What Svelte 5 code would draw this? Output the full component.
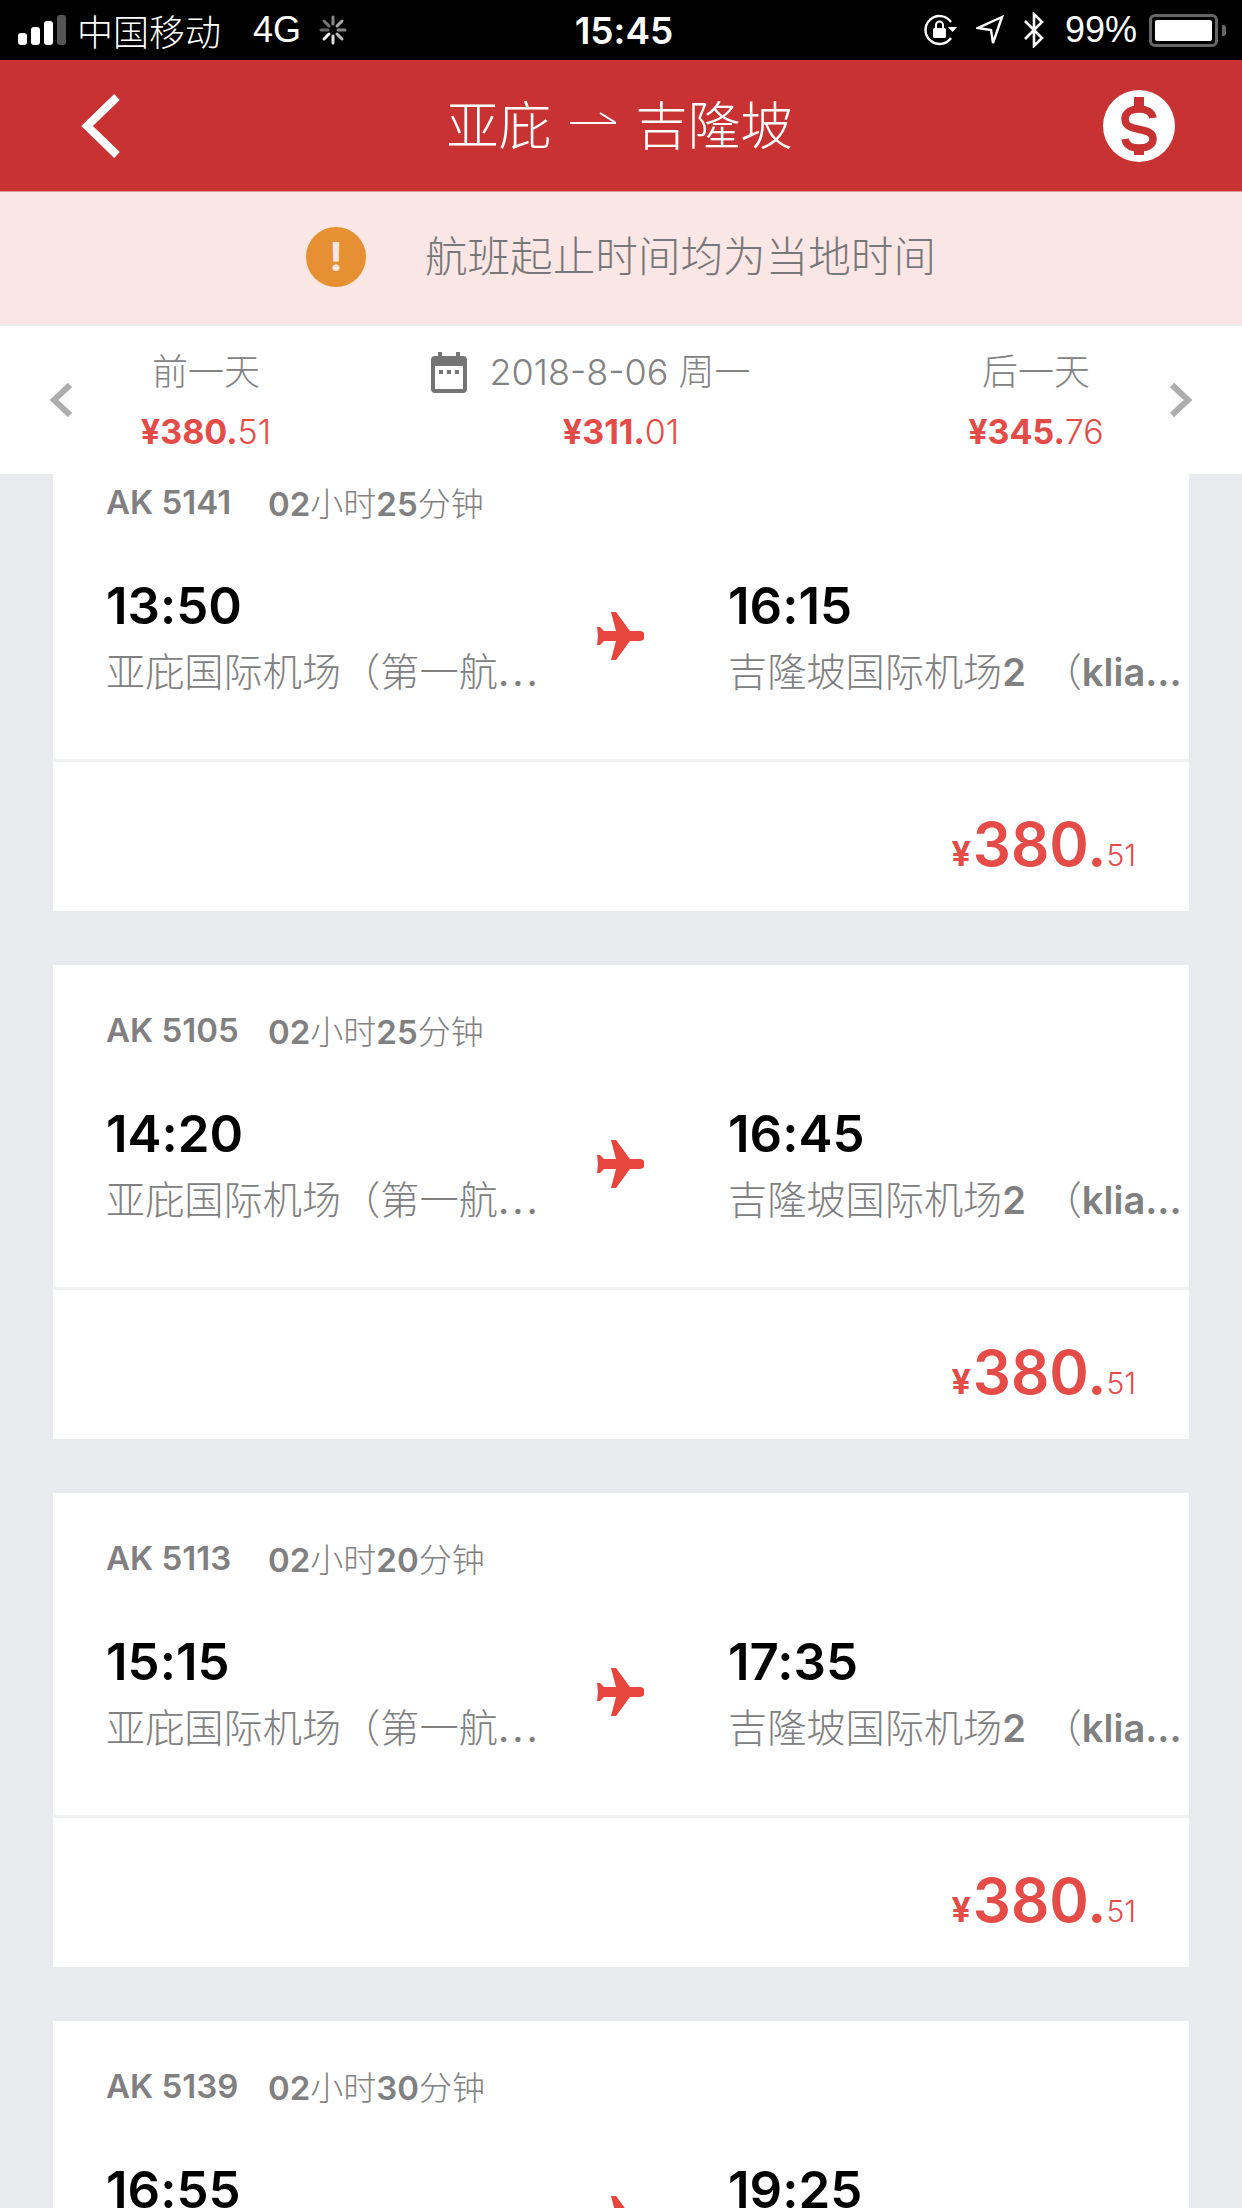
<script>
    const days = [
        { label: '前一天', yuan: '380', cents: '51', side: 'prev' },
        { label: '2018-8-06 周一', yuan: '311', cents: '01', side: 'mid' },
        { label: '后一天', yuan: '345', cents: '76', side: 'next' }
    ];

    const flights = [
        { no: 'AK 5141', hours: '02', mins: '25', dep: '13:50', arr: '16:15' },
        { no: 'AK 5105', hours: '02', mins: '25', dep: '14:20', arr: '16:45' },
        { no: 'AK 5113', hours: '02', mins: '20', dep: '15:15', arr: '17:35' },
        { no: 'AK 5139', hours: '02', mins: '30', dep: '16:55', arr: '19:25' }
    ];
</script>

<div class="screen">
    <div class="status">
        <div class="status-left">
            <div class="signal"><i></i><i></i><i></i><i class="off"></i></div>
            <span class="carrier">中国移动</span>
            <span class="net">4G</span>
            <svg class="spinner" width="28" height="30" viewBox="0 0 28 30">
                <g stroke-width="3" stroke-linecap="round">
                    <path d="M14 2v7" stroke="#888" />
                    <path d="M14 21v7" stroke="#ddd" />
                    <path d="M2 15h7" stroke="#666" />
                    <path d="M19 15h7" stroke="#888" />
                    <path d="M5 6l5 5" stroke="#777" />
                    <path d="M23 6l-5 5" stroke="#aaa" />
                    <path d="M5 24l5-5" stroke="#fff" />
                    <path d="M23 24l-5-5" stroke="#bbb" />
                </g>
            </svg>
        </div>
        <span class="clock">15:45</span>
        <div class="status-right">
            <svg width="33" height="34" viewBox="0 0 33 34" fill="none">
                <path d="M27 9A14 14 0 1 0 27 25" stroke="#fff" stroke-width="2.400" />
                <path d="M24 14h9l-4.500 5z" fill="#fff" />
                <rect x="9" y="15" width="13" height="10" rx="1.500" fill="#fff" />
                <path d="M12 15v-3a3.500 3.500 0 0 1 7 0v3" stroke="#fff" stroke-width="2" />
            </svg>
            <svg width="28" height="32" viewBox="0 0 28 32" fill="none">
                <path d="M26 3L2 14l13 2 2 13z" stroke="#fff" stroke-width="2.400" />
            </svg>
            <svg width="21" height="36" viewBox="0 0 21 36" fill="none">
                <path d="M2 9l17 17-8 8V2l8 8L2 27" stroke="#fff" stroke-width="2.600" />
            </svg>
            <span class="pct">99%</span>
            <div class="battery"><div class="charge"></div></div>
            <div class="nub"></div>
        </div>
    </div>

    <header class="nav">
        <svg class="back" width="42" height="66" viewBox="0 0 42 66" fill="none">
            <path d="M37 4L7 33l30 29" stroke="#fff" stroke-width="8" />
        </svg>
        <h1>亚庇<svg class="title-arrow" width="46" height="14" viewBox="0 0 46 14" fill="none"><path d="M0 12h46L30 2" stroke="#fff" stroke-width="2" /></svg>吉隆坡</h1>
        <svg class="fare" width="72" height="72" viewBox="0 0 72 72">
            <circle cx="36" cy="36" r="36" fill="#fff" />
            <path d="M50 28c-1-6-7-9-14-9s-14 3-14 10c0 15 28 6 28 20 0 6-6 9-14 9s-13-3-14-9" fill="none" stroke="#c83232" stroke-width="7.500" />
            <path d="M36 7v58" stroke="#c83232" stroke-width="10" stroke-dasharray="10 38 10" />
        </svg>
    </header>

    <div class="notice">
        <span class="alert">!</span>
        <span class="notice-text">航班起止时间均为当地时间</span>
    </div>

    <nav class="dates">
        <svg class="step" width="24" height="36" viewBox="0 0 24 36" fill="none">
            <path d="M21 3L5 18l16 15" stroke="#adadad" stroke-width="6" />
        </svg>
        {#each days as day}
            <div class="day {day.side}">
                <div class="day-label">
                    {#if day.side === 'mid'}
                        <svg width="36" height="42" viewBox="0 0 36 42">
                            <path d="M7 1h4v4h14V1h4v4h3a4 4 0 0 1 4 4v29a4 4 0 0 1-4 4H4a4 4 0 0 1-4-4V9a4 4 0 0 1 4-4h3z" fill="#757575" />
                            <rect x="4" y="15" width="28" height="23" fill="#fff" />
                            <path d="M8 19h4v4H8zM16 19h4v4h-4zM24 19h4v4h-4z" fill="#757575" />
                        </svg>
                    {/if}
                    <span>{day.label}</span>
                </div>
                <div class="day-price"><b>¥{day.yuan}.</b>{day.cents}</div>
            </div>
        {/each}
        <svg class="step" width="24" height="36" viewBox="0 0 24 36" fill="none">
            <path d="M3 3l16 15L3 33" stroke="#adadad" stroke-width="6" />
        </svg>
    </nav>

    <div class="list">
        <div class="list-inner">
            {#each flights as f}
                <article class="card">
                    <div class="card-top">
                        <div class="meta"><span class="no">{f.no}</span><span>{f.hours}<em>小时</em>{f.mins}<em>分钟</em></span></div>
                        <div class="route">
                            <div class="stop">
                                <div class="time">{f.dep}</div>
                                <div class="airport">亚庇国际机场（第一航<span class="dots">...</span></div>
                            </div>
                            <svg class="plane" width="48" height="48" viewBox="0 0 48 48">
                                <path d="M15 0h5l14 19h10a5 5 0 0 1 0 10H34L20 48h-5l5-19H8l-4 4H1l1-9-1-9h3l4 4h12z" fill="#e8463c" />
                            </svg>
                            <div class="stop">
                                <div class="time">{f.arr}</div>
                                <div class="airport">吉隆坡国际机场<b>2</b> <span class="paren">（</span><b>klia...</b></div>
                            </div>
                        </div>
                    </div>
                    <div class="card-bottom">
                        <div class="price"><span class="sign">¥</span><b>380.</b><span class="cents">51</span></div>
                    </div>
                </article>
            {/each}
        </div>
    </div>
</div>

<style>
    :global(body) {
        margin: 0;
        background: #e8eaed;
    }

    .screen {
        width: 1242px;
        height: 2208px;
        overflow: hidden;
        display: flex;
        flex-direction: column;
        font-family: Inter, "Noto Sans CJK SC", sans-serif;
    }

    .status {
        height: 60px;
        flex: none;
        background: #000;
        color: #fff;
        display: grid;
        grid-template-columns: 1fr auto 1fr;
        align-items: center;
        padding: 0 16px 0 18px;
        font-family: "Liberation Sans", "Noto Sans CJK SC", sans-serif;
        font-size: 36px;
    }

    .status-left,
    .status-right {
        display: flex;
        align-items: center;
    }

    .status-right {
        justify-content: flex-end;
        gap: 19px;
    }

    .signal {
        display: flex;
        align-items: flex-end;
        gap: 4px;
        height: 30px;
    }

    .signal i {
        width: 9px;
        background: #fff;
        border-radius: 3px;
    }

    .signal i:nth-child(1) { height: 12px; }
    .signal i:nth-child(2) { height: 18px; }
    .signal i:nth-child(3) { height: 24px; }
    .signal i:nth-child(4) { height: 30px; }
    .signal .off { background: #555; }

    .carrier {
        margin-left: 11px;
        font-family: "Noto Sans CJK SC", sans-serif;
        font-size: 36px;
        font-weight: 300;
    }

    .net {
        margin-left: 32px;
    }

    .spinner {
        margin-left: 18px;
    }

    .clock {
        font-family: Inter, sans-serif;
        font-size: 37px;
        font-weight: 600;
        margin-left: 4px;
        font-feature-settings: "calt" 0;
    }

    .pct {
        margin-left: 2px;
        margin-right: -7px;
    }

    .battery {
        width: 57px;
        height: 21px;
        border: 3px solid #666;
        border-radius: 6px;
        padding: 3px;
        margin-right: -15px;
    }

    .charge {
        height: 100%;
        background: #fff;
        border-radius: 2px;
    }

    .nub {
        width: 4px;
        height: 11px;
        background: #666;
        border-radius: 0 3px 3px 0;
    }

    .nav {
        height: 132px;
        flex: none;
        box-sizing: border-box;
        background: #c83232;
        display: flex;
        align-items: center;
        justify-content: space-between;
        padding: 0 67px 0 80px;
        border-bottom: 1px solid #d99;
    }

    .nav h1 {
        margin: -6px 0 0 14px;
        color: #fff;
        font-size: 52.500px;
        font-weight: 300;
        line-height: 1;
        font-family: "Noto Sans CJK SC", sans-serif;
        display: flex;
        align-items: center;
        gap: 19px;
    }

    .title-arrow {
        margin-top: -10px;
    }

    .notice {
        height: 134px;
        flex: none;
        box-sizing: border-box;
        background: #fbe6e6;
        border-bottom: 2px solid #ececec;
        display: flex;
        align-items: center;
        justify-content: center;
        gap: 59px;
    }

    .alert {
        width: 60px;
        height: 60px;
        border-radius: 50%;
        background: #e79033;
        color: #fbe6e6;
        font-size: 40px;
        font-weight: 700;
        line-height: 60px;
        text-align: center;
        margin-top: -2px;
    }

    .notice-text {
        font-family: "Noto Sans CJK SC", sans-serif;
        font-size: 42.600px;
        font-weight: 300;
        color: #777;
        margin-top: -9px;
    }

    .dates {
        height: 148px;
        flex: none;
        box-sizing: border-box;
        background: #fff;
        display: flex;
        align-items: center;
        padding: 2px 49px 0;
        position: relative;
        z-index: 1;
    }

    .step {
        margin-top: -2px;
    }

    .day {
        text-align: center;
    }

    .prev { width: 256px; margin-left: 5px; }
    .mid { flex: 1; }
    .mid .day-label { padding-right: 60px; }
    .next { width: 256px; margin-right: 5px; }

    .day-label {
        font-size: 36px;
        font-weight: 300;
        color: #828282;
        line-height: 44px;
        display: flex;
        align-items: center;
        justify-content: center;
        gap: 22px;
    }

    .day-price {
        margin-top: 18px;
        font-size: 34px;
        font-weight: 300;
        color: #e54b47;
        line-height: 40px;
    }

    .day-price b {
        font-weight: 700;
    }

    .list {
        flex: 1;
        overflow: hidden;
    }

    .list-inner {
        margin-top: -37px;
        padding: 0 53px;
        display: flex;
        flex-direction: column;
        gap: 54px;
    }

    .card {
        height: 474px;
        flex: none;
        background: #fff;
        display: flex;
        flex-direction: column;
    }

    .card-top {
        height: 325px;
        flex: none;
        box-sizing: border-box;
        border-bottom: 3px solid #eef0f1;
        padding: 43px 0 0 53px;
    }

    .meta {
        display: flex;
        font-size: 33px;
        font-weight: 600;
        color: #808080;
        line-height: 44px;
    }

    .no {
        width: 162px;
        flex: none;
    }

    .meta em {
        font-style: normal;
        font-weight: 300;
        font-family: "Noto Sans CJK SC", sans-serif;
    }

    .route {
        display: grid;
        grid-template-columns: 490px 48px 1fr;
        margin-top: 51px;
    }

    .plane {
        margin-top: 35px;
    }

    .route .stop:last-child {
        margin-left: 84px;
        white-space: nowrap;
    }

    .time {
        font-size: 51px;
        font-weight: 600;
        color: #000;
        line-height: 58px;
        font-feature-settings: "calt" 0;
    }

    .airport {
        font-family: "Noto Sans CJK SC", sans-serif;
        font-size: 39.200px;
        font-weight: 300;
        color: #808080;
        line-height: 54px;
        margin-top: 7px;
    }

    .airport b {
        font-family: Inter, sans-serif;
        font-size: 38px;
        font-weight: 600;
    }

    .paren {
        margin-left: 8px;
    }

    .dots {
        font-family: Inter, sans-serif;
        font-weight: 400;
        letter-spacing: 3px;
    }

    .card-bottom {
        flex: 1;
        display: flex;
        justify-content: flex-end;
        padding: 52px 53px 0 0;
    }

    .price {
        color: #e54b47;
        line-height: 60px;
        white-space: nowrap;
    }

    .price b {
        font-size: 60px;
        font-weight: 600;
    }

    .sign {
        font-size: 34px;
        font-weight: 700;
        margin-right: 2px;
    }

    .cents {
        font-size: 30px;
        font-weight: 300;
    }
</style>
